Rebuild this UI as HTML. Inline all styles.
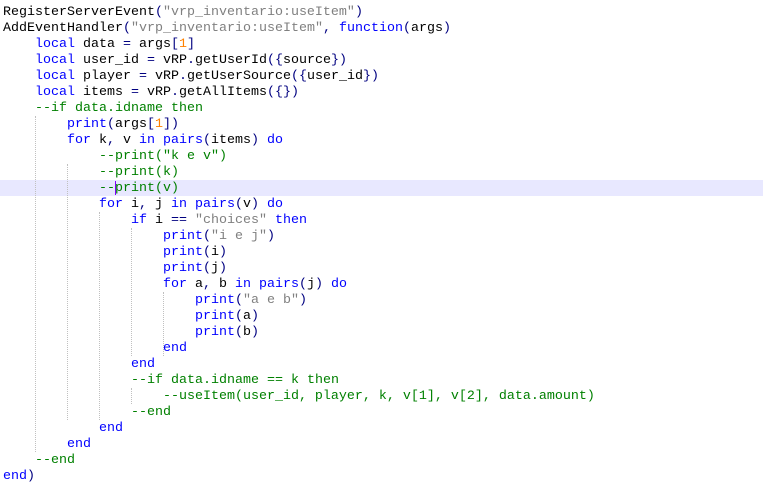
<!DOCTYPE html><html><head><style>
body{margin:0;background:#fff;width:763px;height:493px;overflow:hidden;position:relative}
pre{margin:0;position:absolute;left:3px;top:5px;font-family:"Liberation Mono",monospace;font-size:13.33px;line-height:16px;color:#000}
.k{color:#0000ff}.f{color:#0000ff}.o{color:#000080}.s{color:#808080}.c{color:#008000}.n{color:#ff8000}
.hl{position:absolute;left:0;top:180px;width:763px;height:16px;background:#e8e8ff}
.g{position:absolute;width:0;border-left:1px dotted #c0c0c0}
.cur{position:absolute;left:115px;top:181px;width:1px;height:14px;background:#8000ff}
</style></head><body>
<div class="hl"></div>
<div class="g" style="left:35px;top:116px;height:336px"></div>
<div class="g" style="left:67px;top:164px;height:256px"></div>
<div class="g" style="left:99px;top:212px;height:208px"></div>
<div class="g" style="left:131px;top:228px;height:128px"></div>
<div class="g" style="left:163px;top:292px;height:64px"></div>
<div class="g" style="left:131px;top:388px;height:16px"></div>
<div class="cur"></div>
<pre>RegisterServerEvent<span class="o">(</span><span class="s">"vrp_inventario:useItem"</span><span class="o">)</span>
AddEventHandler<span class="o">(</span><span class="s">"vrp_inventario:useItem"</span><span class="o">,</span> <span class="k">function</span><span class="o">(</span>args<span class="o">)</span>
    <span class="k">local</span> data <span class="o">=</span> args<span class="o">[</span><span class="n">1</span><span class="o">]</span>
    <span class="k">local</span> user_id <span class="o">=</span> vRP<span class="o">.</span>getUserId<span class="o">({</span>source<span class="o">})</span>
    <span class="k">local</span> player <span class="o">=</span> vRP<span class="o">.</span>getUserSource<span class="o">({</span>user_id<span class="o">})</span>
    <span class="k">local</span> items <span class="o">=</span> vRP<span class="o">.</span>getAllItems<span class="o">({})</span>
    <span class="c">--if data.idname then</span>
        <span class="f">print</span><span class="o">(</span>args<span class="o">[</span><span class="n">1</span><span class="o">])</span>
        <span class="k">for</span> k<span class="o">,</span> v <span class="k">in</span> <span class="f">pairs</span><span class="o">(</span>items<span class="o">)</span> <span class="k">do</span>
            <span class="c">--print("k e v")</span>
            <span class="c">--print(k)</span>
            <span class="c">--print(v)</span>
            <span class="k">for</span> i<span class="o">,</span> j <span class="k">in</span> <span class="f">pairs</span><span class="o">(</span>v<span class="o">)</span> <span class="k">do</span>
                <span class="k">if</span> i <span class="o">==</span> <span class="s">"choices"</span> <span class="k">then</span>
                    <span class="f">print</span><span class="o">(</span><span class="s">"i e j"</span><span class="o">)</span>
                    <span class="f">print</span><span class="o">(</span>i<span class="o">)</span>
                    <span class="f">print</span><span class="o">(</span>j<span class="o">)</span>
                    <span class="k">for</span> a<span class="o">,</span> b <span class="k">in</span> <span class="f">pairs</span><span class="o">(</span>j<span class="o">)</span> <span class="k">do</span>
                        <span class="f">print</span><span class="o">(</span><span class="s">"a e b"</span><span class="o">)</span>
                        <span class="f">print</span><span class="o">(</span>a<span class="o">)</span>
                        <span class="f">print</span><span class="o">(</span>b<span class="o">)</span>
                    <span class="k">end</span>
                <span class="k">end</span>
                <span class="c">--if data.idname == k then</span>
                    <span class="c">--useItem(user_id, player, k, v[1], v[2], data.amount)</span>
                <span class="c">--end</span>
            <span class="k">end</span>
        <span class="k">end</span>
    <span class="c">--end</span>
<span class="k">end</span><span class="o">)</span></pre>
</body></html>
